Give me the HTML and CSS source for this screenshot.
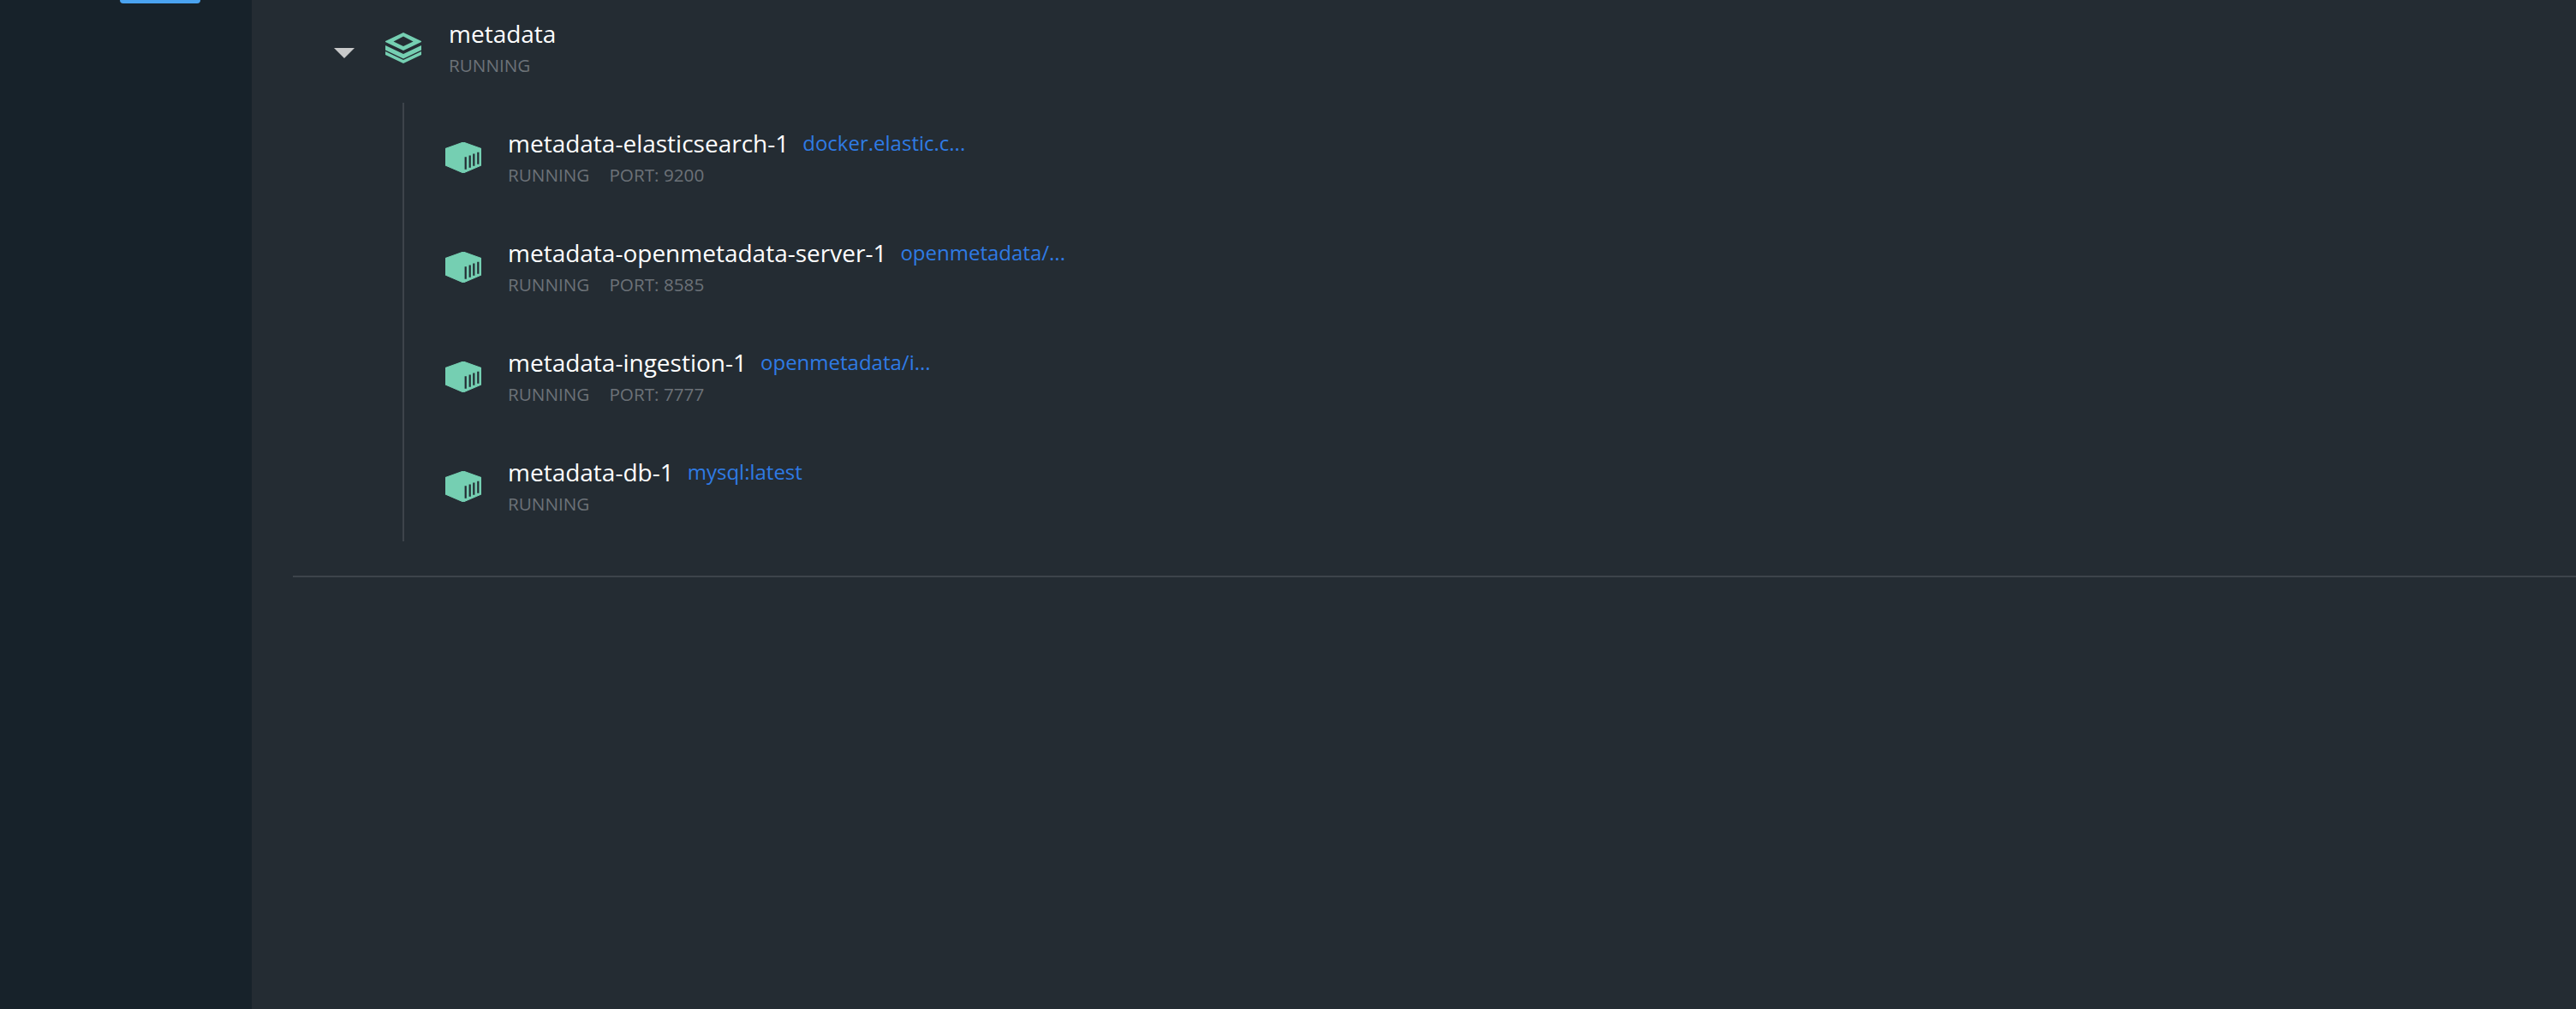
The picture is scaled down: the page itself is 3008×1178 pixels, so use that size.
FILE: index.html
```html
<!DOCTYPE html>
<html lang="en">
<head>
<meta charset="utf-8">
<title>Containers</title>
<link rel="stylesheet" href="styles.css">
</head>
<body>
<div class="app">
  <aside class="sidebar"><div class="sidebar-button"></div></aside>
  <main class="main">
    <section class="group">
      <div class="group-header">
        <svg class="caret" width="24" height="12" viewBox="0 0 24 12"><path d="M0 0H24L12 12Z" fill="#c8c9ca"/></svg>
        <svg class="stack" width="42" height="36" viewBox="0 0 42 36"><path fill-rule="evenodd" d="M21 0L42 10V11L21 21L0 11V10ZM21 4.500L9.500 10.500L21 16L32.500 10.500Z" fill="#75cfb2"/><path d="M0 15L21 25L42 15V20.500L21 30.500L0 20.500ZM0 22L21 32L42 22V26L21 36L0 26Z" fill="#75cfb2"/></svg>
        <div class="info">
          <div class="name-line"><span class="name">metadata</span></div>
          <div class="meta"><span>RUNNING</span></div>
        </div>
      </div>
      <div class="children">
        <div class="row">
          <svg class="cube" width="42" height="36" viewBox="0 0 42 36"><use href="#cube"/></svg>
          <div class="info">
            <div class="name-line"><span class="name">metadata-elasticsearch-1</span><span class="image">docker.elastic.c...</span></div>
            <div class="meta"><span>RUNNING</span><span>PORT: 9200</span></div>
          </div>
        </div>
        <div class="row">
          <svg class="cube" width="42" height="36" viewBox="0 0 42 36"><use href="#cube"/></svg>
          <div class="info">
            <div class="name-line"><span class="name">metadata-openmetadata-server-1</span><span class="image">openmetadata/...</span></div>
            <div class="meta"><span>RUNNING</span><span>PORT: 8585</span></div>
          </div>
        </div>
        <div class="row">
          <svg class="cube" width="42" height="36" viewBox="0 0 42 36"><use href="#cube"/></svg>
          <div class="info">
            <div class="name-line"><span class="name">metadata-ingestion-1</span><span class="image">openmetadata/i...</span></div>
            <div class="meta"><span>RUNNING</span><span>PORT: 7777</span></div>
          </div>
        </div>
        <div class="row">
          <svg class="cube" width="42" height="36" viewBox="0 0 42 36"><use href="#cube"/></svg>
          <div class="info">
            <div class="name-line"><span class="name">metadata-db-1</span><span class="image">mysql:latest</span></div>
            <div class="meta"><span>RUNNING</span></div>
          </div>
        </div>
      </div>
    </section>
  </main>
</div>
<svg class="defs" width="0" height="0">
  <defs>
    <g id="cube">
      <path d="M21 0L42 7.500V27L21 36L0 27V7.500Z" fill="#75cfb2" stroke="#75cfb2" stroke-linejoin="round"/>
      <path d="M23.700 17.300V31.700M28.700 15.500V29.700M33.300 13.500V27.700M38.300 11.700V25.700" stroke="#242c33" stroke-width="2.200"/>
    </g>
  </defs>
</svg>
</body>
</html>
```

FILE: styles.css
```css
* { box-sizing: border-box; }
html, body { margin: 0; height: 100%; overflow: hidden; }
body {
  background: #242c33;
  font-family: "Open Sans", sans-serif;
}
.app { display: flex; height: 1178px; }
.sidebar { width: 294px; flex: none; background: #17222a; }
.sidebar-button {
  width: 94px;
  height: 4px;
  margin-left: 140px;
  background: #4aa3f0;
  border-radius: 0 0 6px 6px;
}
.main { flex: 1; padding: 0 0 0 48px; min-width: 0; }
.group { border-bottom: 2px solid #3d444b; height: 674px; }
.group-header {
  display: flex;
  align-items: flex-start;
  height: 120px;
  padding-top: 20px;
}
.caret { margin: 36px 0 0 48px; flex: none; }
.stack { margin: 18px 0 0 36px; flex: none; }
.group-header .info { margin-left: 32px; }
.children {
  margin-left: 128px;
  width: calc(100% - 128px);
  height: 512px;
  border-left: 2px solid #3d444b;
  padding-left: 48px;
}
.row { display: flex; align-items: flex-start; height: 128px; padding-top: 28px; }
.cube { flex: none; margin-top: 18px; }
.row .info { margin-left: 31px; }
.name-line { display: flex; align-items: center; height: 38px; line-height: 38px; }
.name { font-size: 28px; color: #fff; white-space: nowrap; }
.image { font-size: 24px; color: #2f7be5; margin-left: 16px; white-space: nowrap; }
.meta {
  display: flex;
  gap: 23px;
  font-size: 20.7px;
  line-height: 30px;
  margin-top: 3px;
  color: #6c7278;
  white-space: nowrap;
}
.defs { position: absolute; }
```
